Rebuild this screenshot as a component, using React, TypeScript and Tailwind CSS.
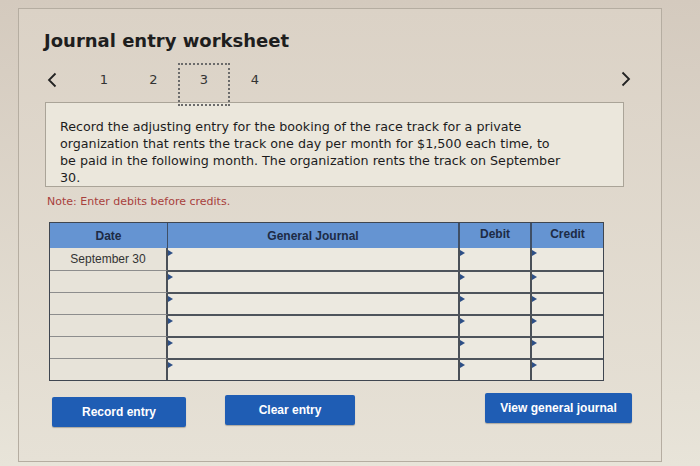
import React from "react";

const rows = ["September 30", "", "", "", "", ""];

const questionLines = [
  "Record the adjusting entry for the booking of the race track for a private",
  "organization that rents the track one day per month for $1,500 each time, to",
  "be paid in the following month. The organization rents the track on September",
  "30.",
];

function Marker() {
  return (
    <span className="absolute left-0 top-[2px] h-0 w-0 border-y-[3px] border-l-[5px] border-y-transparent border-l-[#2d4f86]" />
  );
}

function App() {
  return (
    <div className="h-[466px] w-[700px] overflow-hidden bg-gradient-to-b from-[#d4cabe] to-[#e8e4d9] pt-[8px] pl-[18px]">
      <div className="h-[454px] w-[644px] border border-[#b5ada1] bg-gradient-to-b from-[#dbd2c6] to-[#e6e1d6] pl-[25px] pt-[20px] font-['DejaVu_Sans',sans-serif] text-[#222]">
        <h1 className="text-[18px] font-bold leading-[23px] text-[#1e1e1e]">Journal entry worksheet</h1>

        <div className="mt-[11px] flex h-[39px] items-start pr-[30px]">
          <svg className="ml-[3px] mt-[9px]" width="10" height="16" viewBox="0 0 10 16" fill="none" stroke="#222" strokeWidth="1.8">
            <path d="M8.5 1.5 2 8l6.5 6.5" />
          </svg>
          <div className="ml-[22px] w-[50px] pt-[9px] text-center text-[13px] leading-[16px] text-[#333]">1</div>
          <div className="w-[49px] pt-[9px] text-center text-[13px] leading-[16px] text-[#333]">2</div>
          <div className="relative z-10 h-[43px] w-[52px] border-2 border-dotted border-[#6b6b6b] pt-[7px] text-center text-[13px] leading-[16px] text-[#333]">
            3
          </div>
          <div className="w-[50px] pt-[9px] text-center text-[13px] leading-[16px] text-[#333]">4</div>
          <div className="flex-1" />
          <svg className="mt-[8px]" width="10" height="16" viewBox="0 0 10 16" fill="none" stroke="#222" strokeWidth="1.8">
            <path d="M1.5 1.5 8 8l-6.5 6.5" />
          </svg>
        </div>

        <div className="ml-[1px] w-[579px] border border-[#aaa498] bg-[#ebe7dc] pl-[14px] pt-[15px] text-[12.7px] leading-[17px] text-[#1c1c1c]">
          {questionLines.map((line) => (
            <div key={line} className="whitespace-nowrap">
              {line}
            </div>
          ))}
        </div>

        <p className="ml-[3px] mt-[8px] text-[11px] leading-[14px] text-[#a8403c]">Note: Enter debits before credits.</p>

        <div className="ml-[5px] mt-[13px] w-[555px] border border-[#3f4650] font-['Liberation_Sans',sans-serif]">
          <div className="grid h-[25px] grid-cols-[118px_292px_72px_71px] bg-[#6594d2] text-[12px] font-bold text-[#1d2b45]">
            <div className="flex items-center justify-center border-r border-[#3f4f66]">Date</div>
            <div className="flex items-center justify-center border-r-2 border-[#3f4f66]">General Journal</div>
            <div className="flex items-start justify-center border-r-2 border-[#3f4f66] pt-[2px]">Debit</div>
            <div className="flex items-start justify-center pt-[2px]">Credit</div>
          </div>
          {rows.map((date, i) => (
            <div key={i} className="grid h-[22px] grid-cols-[118px_292px_72px_71px]">
              <div
                className={`flex items-center justify-center border-r-2 border-r-[#4a5058] bg-[#e7e3d9] text-[12px] text-[#333] ${
                  i > 0 ? "border-t border-t-[#8d8d8d]" : ""
                }`}
              >
                {date}
              </div>
              <div className={`relative border-r-2 border-r-[#4a5058] bg-[#ece9e0] ${i > 0 ? "border-t-2 border-t-[#4e545c]" : ""}`}>
                <Marker />
              </div>
              <div className={`relative border-r-2 border-r-[#4a5058] bg-[#ece9e0] ${i > 0 ? "border-t-2 border-t-[#4e545c]" : ""}`}>
                <Marker />
              </div>
              <div className={`relative bg-[#ece9e0] ${i > 0 ? "border-t-2 border-t-[#4e545c]" : ""}`}>
                <Marker />
              </div>
            </div>
          ))}
        </div>

        <div className="mt-[12px] flex items-start font-['Liberation_Sans',sans-serif] text-[12px] font-bold text-white">
          <button className="ml-[8px] mt-[4px] h-[30px] w-[134px] rounded-[2px] bg-[#1f5db4] shadow-[0_1px_1px_rgba(0,0,0,0.25)]">
            Record entry
          </button>
          <button className="ml-[39px] mt-[2px] h-[30px] w-[130px] rounded-[2px] bg-[#1f5db4] shadow-[0_1px_1px_rgba(0,0,0,0.25)]">
            Clear entry
          </button>
          <button className="ml-[130px] h-[30px] w-[147px] rounded-[2px] bg-[#1f5db4] shadow-[0_1px_1px_rgba(0,0,0,0.25)]">
            View general journal
          </button>
        </div>
      </div>
    </div>
  );
}

export default App;
